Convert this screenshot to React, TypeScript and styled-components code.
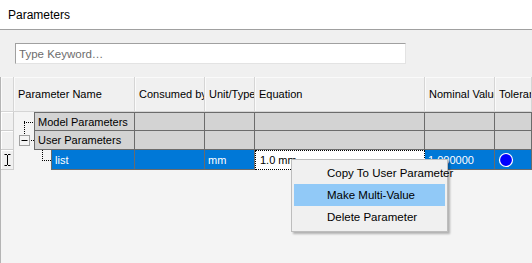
import React from 'react'
import styled, { createGlobalStyle } from 'styled-components'

const GlobalStyle = createGlobalStyle`
  html, body {
    margin: 0;
    padding: 0;
    background: #f0f0f0;
  }
  body {
    font-family: 'Liberation Sans', Arial, sans-serif;
    font-size: 11px;
    color: #000;
  }
`

const COLS = '13px 121px 70px 50px 170px 70px 1fr'

const Window = styled.div`
  width: 532px;
  height: 263px;
  display: flex;
  flex-direction: column;
  overflow: hidden;
`

const TitleBar = styled.div`
  height: 30px;
  flex: none;
  display: flex;
  align-items: center;
  padding-left: 8px;
  background: #fff;
  border-bottom: 1px solid #a0a0a0;
  box-sizing: border-box;
  font-size: 12px;
`

const Panel = styled.div`
  flex: 1;
  display: flex;
  flex-direction: column;
  padding-top: 13px;
  background: #f0f0f0;
  min-height: 0;
`

const Search = styled.input`
  margin-left: 15px;
  width: 391px;
  height: 21px;
  box-sizing: border-box;
  border: 1px solid;
  border-color: #a0a0a0 #e3e3e3 #e3e3e3 #a0a0a0;
  outline: 1px solid #fff;
  outline-offset: -2px;
  background: #fff;
  padding: 0 3px;
  font-family: inherit;
  font-size: 11.5px;
  &::placeholder {
    color: #6d6d6d;
  }
`

const GridArea = styled.div`
  margin-top: 13px;
  flex: 1;
  position: relative;
  background: #f4f4f4;
  border-left: 1px solid #b4b4b4;
`

const Row = styled.div<{ $h: number }>`
  display: grid;
  grid-template-columns: ${COLS};
  height: ${p => p.$h}px;
`

const HeaderCell = styled.div`
  display: flex;
  align-items: center;
  padding-left: 4px;
  background: #f0f0f0;
  border-right: 1px solid #d5d5d5;
  border-bottom: 1px solid #d5d5d5;
  box-shadow: inset 1px 1px #fafafa;
  white-space: nowrap;
  overflow: hidden;
  box-sizing: border-box;
  color: #000;
`

const RowHeader = styled.div`
  display: flex;
  align-items: center;
  justify-content: center;
  background: #f0f0f0;
  border-right: 1px solid #cdcdcd;
  border-bottom: 1px solid #cdcdcd;
  box-shadow: inset 1px 1px #fff;
  box-sizing: border-box;
`

type Kind = 'group' | 'selected' | 'edit'

const Cell = styled.div<{ $kind: Kind; $top?: boolean }>`
  display: flex;
  align-items: center;
  padding-left: 3px;
  box-sizing: border-box;
  white-space: nowrap;
  overflow: hidden;
  background: ${p => (p.$kind === 'group' ? '#d3d3d3' : p.$kind === 'selected' ? '#0078d7' : '#fff')};
  color: ${p => (p.$kind === 'selected' ? '#fff' : '#000')};
  border-right: 1px solid #6b6b6b;
  border-bottom: 1px solid #6b6b6b;
  border-top: ${p => (p.$top ? '1px solid #6b6b6b' : 'none')};
  ${p =>
    p.$kind === 'edit' &&
    `
    border: 1px dotted #000;
    padding-left: 4px;
  `}
`

const TreeCell = styled.div`
  display: flex;
  min-width: 0;
`

const Indent = styled.div<{ $w: number }>`
  width: ${p => p.$w}px;
  flex: none;
`

const TreeLabel = styled(Cell)`
  flex: 1;
  border-left: 1px solid #6b6b6b;
`

const TreeLines = styled.svg`
  position: absolute;
  left: 13px;
  top: 35px;
  pointer-events: none;
`

const Menu = styled.div`
  position: absolute;
  left: 290px;
  top: 82px;
  width: 157px;
  padding: 2px 0 3px;
  background: #f0f0f0;
  border: 1px solid #bdbdbd;
  box-shadow: 2px 2px 2px rgba(0, 0, 0, 0.28);
  box-sizing: border-box;
`

const MenuItem = styled.div<{ $active?: boolean }>`
  height: 22px;
  margin: 0 2px;
  padding-left: 33px;
  display: flex;
  align-items: center;
  white-space: nowrap;
  font-size: 11.5px;
  background: ${p => (p.$active ? '#91c9f7' : 'transparent')};
`

const headers = ['Parameter Name', 'Consumed by', 'Unit/Type', 'Equation', 'Nominal Value', 'Tolerance']

export default function App() {
  return (
    <Window>
      <GlobalStyle />
      <TitleBar>Parameters</TitleBar>
      <Panel>
        <Search placeholder="Type Keyword…" readOnly />
        <GridArea>
          <Row $h={35}>
            <HeaderCell />
            {headers.map(h => (
              <HeaderCell key={h}>{h}</HeaderCell>
            ))}
          </Row>

          {['Model Parameters', 'User Parameters'].map((name, i) => (
            <Row $h={19} key={name}>
              <RowHeader />
              <TreeCell>
                <Indent $w={20} />
                <TreeLabel $kind="group" $top={i === 0}>
                  {name}
                </TreeLabel>
              </TreeCell>
              {[0, 1, 2, 3, 4].map(c => (
                <Cell $kind="group" $top={i === 0} key={c} />
              ))}
            </Row>
          ))}

          <Row $h={20}>
            <RowHeader>
              <svg width="7" height="12" viewBox="0 0 7 12">
                <path d="M0.5 0.5h2.5M4 0.5h2.5M3.5 1v10M0.5 11.5h2.5M4 11.5h2.5" stroke="#000" fill="none" />
              </svg>
            </RowHeader>
            <TreeCell>
              <Indent $w={37} />
              <TreeLabel $kind="selected">list</TreeLabel>
            </TreeCell>
            <Cell $kind="selected" />
            <Cell $kind="selected">mm</Cell>
            <Cell $kind="edit">1.0 mm</Cell>
            <Cell $kind="selected">1.000000</Cell>
            <Cell $kind="selected">
              <svg width="16" height="16" viewBox="0 0 16 16">
                <circle cx="8" cy="8" r="6.5" fill="#0000ff" stroke="#fff" strokeWidth="1.2" />
              </svg>
            </Cell>
          </Row>

          <TreeLines width="40" height="60" viewBox="0 0 40 60">
            <g stroke="#000" strokeWidth="1" strokeDasharray="1 1" fill="none">
              <path d="M10.5 9v15" />
              <path d="M10 10.5h10" />
              <path d="M15 28.5h5" />
              <path d="M28.5 38v10" />
              <path d="M28 48.5h9" />
            </g>
            <rect x="5.5" y="23.5" width="10" height="10" fill="#f4f4f4" stroke="#a0a0a0" />
            <path d="M7.5 28.5h6" stroke="#000" />
          </TreeLines>

          <Menu>
            <MenuItem>Copy To User Parameter</MenuItem>
            <MenuItem $active>Make Multi-Value</MenuItem>
            <MenuItem>Delete Parameter</MenuItem>
          </Menu>
        </GridArea>
      </Panel>
    </Window>
  )
}
